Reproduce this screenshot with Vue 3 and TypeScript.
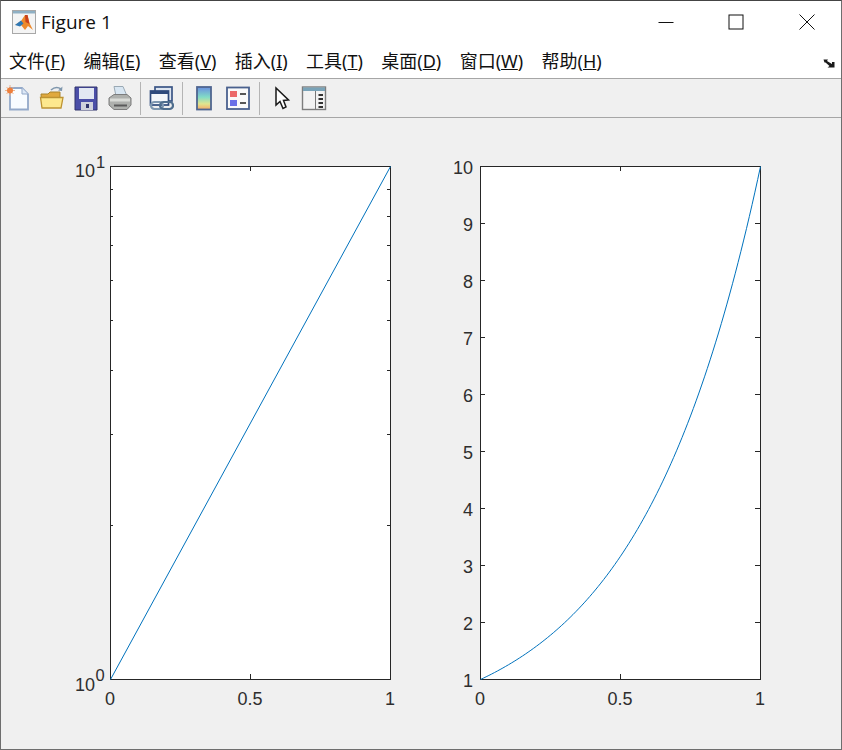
<template>
  <div class="window">
    <div class="titlebar">
      <svg class="app-icon" width="24" height="24" viewBox="0 0 24 24">
        <rect x="0.5" y="0.5" width="23" height="23" fill="#f4f4f4" stroke="#a8a8a8" />
        <rect x="1" y="1" width="22" height="2.5" fill="#8fb0c4" />
        <path d="M3 15 L9 11 L13 5 L15.5 5 L17.5 13 L21 20 L16 16 L13 20 L9 15 Z" fill="#ee8a2c" />
        <path d="M3 15 L9 10.5 L11.5 13.5 L8 16.5 Z" fill="#2f78b4" />
        <path d="M13 5 L15.5 5 L17.5 14 L13.5 12 Z" fill="#c8401c" />
      </svg>
      <span class="title">Figure 1</span>
      <div class="caption-buttons">
        <svg width="16" height="16" viewBox="0 0 16 16" class="cap-min"><path d="M0.5 8.5 H15.5" stroke="#111" fill="none" /></svg>
        <svg width="16" height="16" viewBox="0 0 16 16" class="cap-max"><rect x="1" y="1" width="14" height="14" stroke="#111" fill="none" /></svg>
        <svg width="16" height="16" viewBox="0 0 16 16" class="cap-close"><path d="M0.5 0.5 L15.5 15.5 M15.5 0.5 L0.5 15.5" stroke="#111" fill="none" /></svg>
      </div>
    </div>

    <div class="menubar">
      <span v-for="m in menus" :key="m.key" class="menu-item">{{ m.label }}(<u>{{ m.key }}</u>)</span>
      <svg class="dock" width="12" height="9" viewBox="0 0 12 9">
        <path d="M0.5 0.5 H5 L4 2 L9 5 V3 H11.5 V8.5 H4.5 L6.5 7 L2.5 3.5 L1.5 3.5 Z" fill="#1a1a1a" />
      </svg>
    </div>

    <div class="toolbar">
      <!-- new -->
      <svg class="tool t-new" width="26" height="26" viewBox="0 0 26 26">
        <path d="M5 3 H17 L23 9 V24.5 H5 Z" fill="#f8fcff" stroke="#93a9c9" stroke-width="1.8" />
        <path d="M17 3 V9 H23" fill="#dce8f6" stroke="#93a9c9" />
        <path d="M5 0 V11 M0 5.5 H10 M1.5 2 L8.5 9 M8.5 2 L1.5 9" stroke="#ebab80" stroke-width="0.9" />
        <circle cx="5" cy="5.5" r="3" fill="#ee7f3c" />
      </svg>
      <!-- open -->
      <svg class="tool t-open" width="26" height="26" viewBox="0 0 26 26">
        <path d="M2 9 H9 L11 7 H21 V22 H3 Z" fill="#e0a93e" stroke="#a9842c" />
        <path d="M3 23 L1.5 12.5 H24 L22 23 Z" fill="#fde88e" stroke="#bd9333" stroke-width="1.3" />
        <path d="M12 5 Q17 0.5 22 4" stroke="#7f97ad" stroke-width="1.6" fill="none" />
        <path d="M23.5 1.5 L23 6 L19 5.5 Z" fill="#7f97ad" />
      </svg>
      <!-- save -->
      <svg class="tool t-save" width="26" height="26" viewBox="0 0 26 26">
        <path d="M2 2 H24 V25 H2 Z" fill="#4b4fa8" stroke="#30346c" />
        <rect x="6" y="3" width="15" height="11" fill="#e2e8f3" />
        <rect x="8" y="17" width="12" height="8" fill="#cfd1dc" />
        <rect x="13" y="19" width="3" height="4" fill="#30346c" />
      </svg>
      <!-- print -->
      <svg class="tool t-print" width="26" height="26" viewBox="0 0 26 26">
        <path d="M7 1.5 H16 L20 11 H9 Z" fill="#d8e6f2" stroke="#9aa9b4" />
        <path d="M2 13 L7 9.5 H20 L24 13 V20 L20 24.5 H7 L2 20 Z" fill="#aeb0ad" stroke="#7c7c7c" />
        <path d="M3 13.5 H23 V16.5 H3 Z" fill="#d9dbd7" />
        <path d="M7 20.5 H20" stroke="#5a5a5a" stroke-width="2" />
      </svg>
      <span class="sep"></span>
      <!-- link -->
      <svg class="tool t-link" width="26" height="26" viewBox="0 0 26 26">
        <rect x="7" y="2" width="17" height="14" fill="#dde5f0" stroke="#3a5585" stroke-width="1.7" />
        <rect x="2.5" y="6" width="18" height="14" fill="#f3f6fa" stroke="#2e4a7c" stroke-width="1.7" />
        <rect x="2.5" y="6" width="18" height="3" fill="#2e4a7c" />
        <rect x="3" y="17" width="12" height="7" rx="3.5" fill="none" stroke="#7e97b0" stroke-width="2.2" />
        <rect x="12" y="17" width="13" height="7" rx="3.5" fill="none" stroke="#4f6e8e" stroke-width="2.2" />
      </svg>
      <span class="sep"></span>
      <!-- colorbar -->
      <svg class="tool t-cbar" width="18" height="26" viewBox="0 0 18 26">
        <defs>
          <linearGradient id="cbar" x1="0" y1="0" x2="0" y2="1">
            <stop offset="0" stop-color="#6a8ee0" />
            <stop offset="0.45" stop-color="#82dcc6" />
            <stop offset="0.75" stop-color="#e0e48e" />
            <stop offset="1" stop-color="#f4a868" />
          </linearGradient>
        </defs>
        <rect x="2" y="2" width="14" height="22.5" fill="url(#cbar)" stroke="#4f6590" stroke-width="1.8" />
      </svg>
      <!-- legend -->
      <svg class="tool t-legend" width="26" height="26" viewBox="0 0 26 26">
        <rect x="2" y="2.5" width="22" height="21.5" fill="#fafafa" stroke="#4a618e" stroke-width="1.8" />
        <rect x="5" y="6" width="7" height="6" fill="#ec6a6a" />
        <rect x="5" y="15" width="7" height="6" fill="#6a70e8" />
        <path d="M15 9 H21 M15 18 H21" stroke="#222" stroke-width="1.6" />
      </svg>
      <span class="sep"></span>
      <!-- pointer -->
      <svg class="tool t-arrow" width="20" height="26" viewBox="0 0 20 26">
        <path d="M3 3 V20 L7 16.5 L10 23.5 L13 22 L10.5 15.5 L15.5 15 Z" fill="#fff" stroke="#1a1a1a" stroke-width="1.5" />
      </svg>
      <!-- plot browser -->
      <svg class="tool t-browser" width="26" height="26" viewBox="0 0 26 26">
        <rect x="1.5" y="2" width="23" height="22.5" fill="#f2f2f2" stroke="#7d7d7d" stroke-width="1.4" />
        <rect x="2" y="2.5" width="22" height="3.5" fill="#79a3b8" />
        <path d="M14.5 6 V24" stroke="#777" />
        <path d="M17.5 10 H22 M17.5 14 H22 M17.5 18 H22 M17.5 22 H22" stroke="#333" stroke-width="1.8" />
      </svg>
    </div>

    <svg class="figure" width="840" height="631" viewBox="1 118 840 631">
      <g v-for="ax in axes" :key="ax.x">
        <rect :x="ax.x + 0.5" y="166.5" :width="W" :height="H" fill="#fff" stroke="#262626" />
        <path :d="ax.ticks" stroke="#262626" fill="none" />
        <path :d="ax.curve" stroke="#0072bd" fill="none" />
        <text
          v-for="t in xTicks"
          :key="t.label"
          class="tick"
          :x="ax.x + t.v * W"
          y="705"
          text-anchor="middle"
        >{{ t.label }}</text>
      </g>

      <text class="tick" x="95" y="177" text-anchor="end">10</text>
      <text class="tick exp" x="96" y="168">1</text>
      <text class="tick" x="95" y="690.5" text-anchor="end">10</text>
      <text class="tick exp" x="95.5" y="681">0</text>

      <text
        v-for="n in 10"
        :key="n"
        class="tick"
        x="473"
        :y="linY(n) + 7.5"
        text-anchor="end"
      >{{ n }}</text>
    </svg>
  </div>
</template>

<script setup lang="ts">
const menus = [
  { label: '文件', key: 'F' },
  { label: '编辑', key: 'E' },
  { label: '查看', key: 'V' },
  { label: '插入', key: 'I' },
  { label: '工具', key: 'T' },
  { label: '桌面', key: 'D' },
  { label: '窗口', key: 'W' },
  { label: '帮助', key: 'H' }
]

const W = 280
const H = 513
const TOP = 166
const BOTTOM = TOP + H
const LEFT_X = 110
const RIGHT_X = 480
const TICK = 5
const MINOR_TICK = 3

const xTicks = [
  { v: 0, label: '0' },
  { v: 0.5, label: '0.5' },
  { v: 1, label: '1' }
]

const linY = (n: number) => BOTTOM - ((n - 1) / 9) * H
const logY = (n: number) => BOTTOM - Math.log10(n) * H

const tickPath = (x: number, ys: number[], yLen: number) => {
  let d = ''
  for (const t of xTicks) {
    const px = Math.round(x + t.v * W) + 0.5
    d += `M${px} ${TOP} v${TICK} M${px} ${BOTTOM} v${-TICK} `
  }
  for (const y of ys) {
    const py = Math.round(y) + 0.5
    d += `M${x} ${py} h${yLen} M${x + W} ${py} h${-yLen} `
  }
  return d
}

const samples = Array.from({ length: 101 }, (_, i) => i / 100)

const logTicks = [2, 3, 4, 5, 6, 7, 8, 9].map(logY)
const linTicks = [2, 3, 4, 5, 6, 7, 8, 9].map(linY)

const axes = [
  {
    x: LEFT_X,
    ticks: tickPath(LEFT_X, logTicks, MINOR_TICK),
    curve: `M${LEFT_X + 0.5} ${BOTTOM + 0.5} L${LEFT_X + W + 0.5} ${TOP + 0.5}`
  },
  {
    x: RIGHT_X,
    ticks: tickPath(RIGHT_X, linTicks, TICK),
    curve:
      'M' +
      samples
        .map(s => `${(RIGHT_X + 0.5 + s * W).toFixed(2)} ${(linY(Math.pow(10, s)) + 0.5).toFixed(2)}`)
        .join(' L')
  }
]
</script>

<style>
html,
body {
  margin: 0;
  background: #fff;
}
</style>

<style scoped>
.window {
  box-sizing: border-box;
  width: 842px;
  height: 750px;
  display: flex;
  flex-direction: column;
  border: 1px solid #6e6e6e;
  border-top-color: #444;
  background: #f0f0f0;
  overflow: hidden;
}

.titlebar {
  height: 41px;
  padding-bottom: 4px;
  flex: none;
  display: flex;
  align-items: center;
  padding-left: 11px;
  background: #fff;
}

.app-icon {
  margin-right: 5px;
}

.title {
  font: 19px "Open Sans", "Noto Sans", sans-serif;
  color: #111;
}

.caption-buttons {
  margin-left: auto;
  display: flex;
  align-items: center;
  padding-right: 26px;
}

.cap-min {
  margin-right: 54px;
}

.cap-max {
  margin-right: 55px;
}

.menubar {
  height: 28px;
  padding-bottom: 4px;
  flex: none;
  display: flex;
  align-items: center;
  gap: 18.4px;
  padding-left: 8px;
  background: #fff;
  border-bottom: 1px solid #a6a6a6;
  font: 18px "Noto Sans", "Noto Sans CJK SC", sans-serif;
  color: #111;
}

.menu-item {
  white-space: nowrap;
}

.dock {
  margin-left: auto;
  margin-right: 6px;
  margin-top: 6px;
}

.toolbar {
  height: 38px;
  flex: none;
  display: flex;
  align-items: center;
  padding-left: 4px;
  background: #f0f0f0;
  border-bottom: 1px solid #a6a6a6;
}

.tool {
  flex: none;
  margin-right: 8px;
}

.t-print {
  margin-right: 7px;
}

.t-cbar {
  margin-left: 5px;
  margin-right: 12px;
}

.t-legend {
  margin-right: 8px;
}

.t-arrow {
  margin-left: 6px;
  margin-right: 8px;
}

.sep {
  flex: none;
  width: 1px;
  height: 33px;
  margin-right: 7px;
  background: #b4b4b4;
}

.figure {
  display: block;
  flex: none;
}

.tick {
  font-family: "Liberation Sans", Arial, sans-serif;
  font-size: 18px;
  fill: #2e2e2e;
}

.exp {
  font-size: 16.5px;
}
</style>
